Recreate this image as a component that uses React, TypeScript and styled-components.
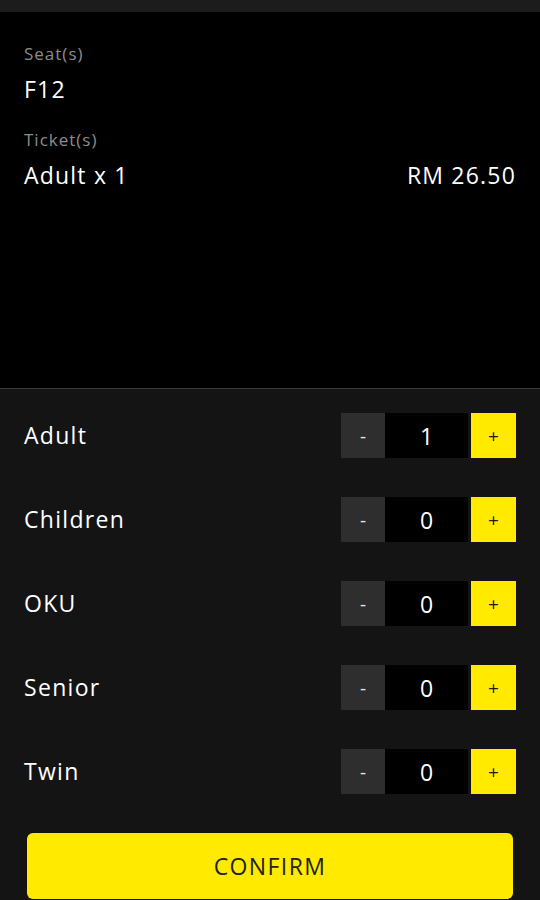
import React from "react";
import styled, { createGlobalStyle } from "styled-components";

const Global = createGlobalStyle`
  html, body {
    margin: 0;
    padding: 0;
    background: #141414;
  }
  body {
    font-family: "Open Sans", "DejaVu Sans", sans-serif;
    color: #fff;
  }
  * { box-sizing: border-box; }
`;

const Page = styled.div`
  width: 540px;
  min-height: 900px;
  background: #141414;
  display: flex;
  flex-direction: column;
`;

const TopBar = styled.div`
  height: 12px;
  background: #1c1c1c;
`;

const Summary = styled.section`
  height: 377px;
  background: #000;
  border-bottom: 1px solid #3a3a3a;
  padding: 30px 24px 0 24px;
  display: flex;
  flex-direction: column;
`;

const Group = styled.div`
  display: flex;
  flex-direction: column;
  gap: 9px;
  & + & {
    margin-top: 24px;
  }
`;

const Label = styled.div`
  font-size: 17px;
  line-height: 24px;
  color: #8c8c8c;
  letter-spacing: 1px;
`;

const ValueRow = styled.div`
  display: flex;
  justify-content: space-between;
  align-items: center;
  font-size: 23px;
  line-height: 30px;
  color: #fff;
  letter-spacing: 1.2px;
  margin-top: -1px;
`;

const Counters = styled.section`
  padding: 24px 24px 0 24px;
  display: flex;
  flex-direction: column;
  gap: 39px;
`;

const Row = styled.div`
  height: 45px;
  display: flex;
  align-items: center;
  justify-content: space-between;
`;

const RowLabel = styled.span`
  font-size: 23px;
  letter-spacing: 1.3px;
  color: #fff;
  margin-top: -2px;
`;

const Stepper = styled.div`
  display: flex;
  height: 45px;
`;

const StepButton = styled.button<{ $plus?: boolean }>`
  width: ${(p) => (p.$plus ? "45px" : "44px")};
  height: 45px;
  border: none;
  padding: 0;
  margin: 0 0 0 ${(p) => (p.$plus ? "3px" : "0")};
  background: ${(p) => (p.$plus ? "#ffea00" : "#2e2e2e")};
  color: ${(p) => (p.$plus ? "#1a1a1a" : "#e6e6e6")};
  font-family: "Open Sans", "DejaVu Sans", sans-serif;
  font-size: 19px;
  display: flex;
  align-items: center;
  justify-content: center;
`;

const Count = styled.div`
  width: 83px;
  height: 45px;
  background: #000;
  color: #fff;
  font-size: 23px;
  display: flex;
  align-items: center;
  justify-content: center;
`;

const ConfirmButton = styled.button`
  margin: 39px 27px 0 27px;
  height: 66px;
  border: none;
  border-radius: 6px;
  background: #ffea00;
  color: #222;
  font-family: "Open Sans", "DejaVu Sans", sans-serif;
  font-size: 23px;
  letter-spacing: 1.4px;
  display: flex;
  align-items: center;
  justify-content: center;
  padding-bottom: 2px;
`;

const types = [
  { name: "Adult", count: 1 },
  { name: "Children", count: 0 },
  { name: "OKU", count: 0 },
  { name: "Senior", count: 0 },
  { name: "Twin", count: 0 },
];

export default function App() {
  return (
    <Page>
      <Global />
      <TopBar />
      <Summary>
        <Group>
          <Label>Seat(s)</Label>
          <ValueRow>F12</ValueRow>
        </Group>
        <Group>
          <Label>Ticket(s)</Label>
          <ValueRow>
            <span>Adult x 1</span>
            <span>RM 26.50</span>
          </ValueRow>
        </Group>
      </Summary>
      <Counters>
        {types.map((t) => (
          <Row key={t.name}>
            <RowLabel>{t.name}</RowLabel>
            <Stepper>
              <StepButton>-</StepButton>
              <Count>{t.count}</Count>
              <StepButton $plus>+</StepButton>
            </Stepper>
          </Row>
        ))}
      </Counters>
      <ConfirmButton>CONFIRM</ConfirmButton>
    </Page>
  );
}
